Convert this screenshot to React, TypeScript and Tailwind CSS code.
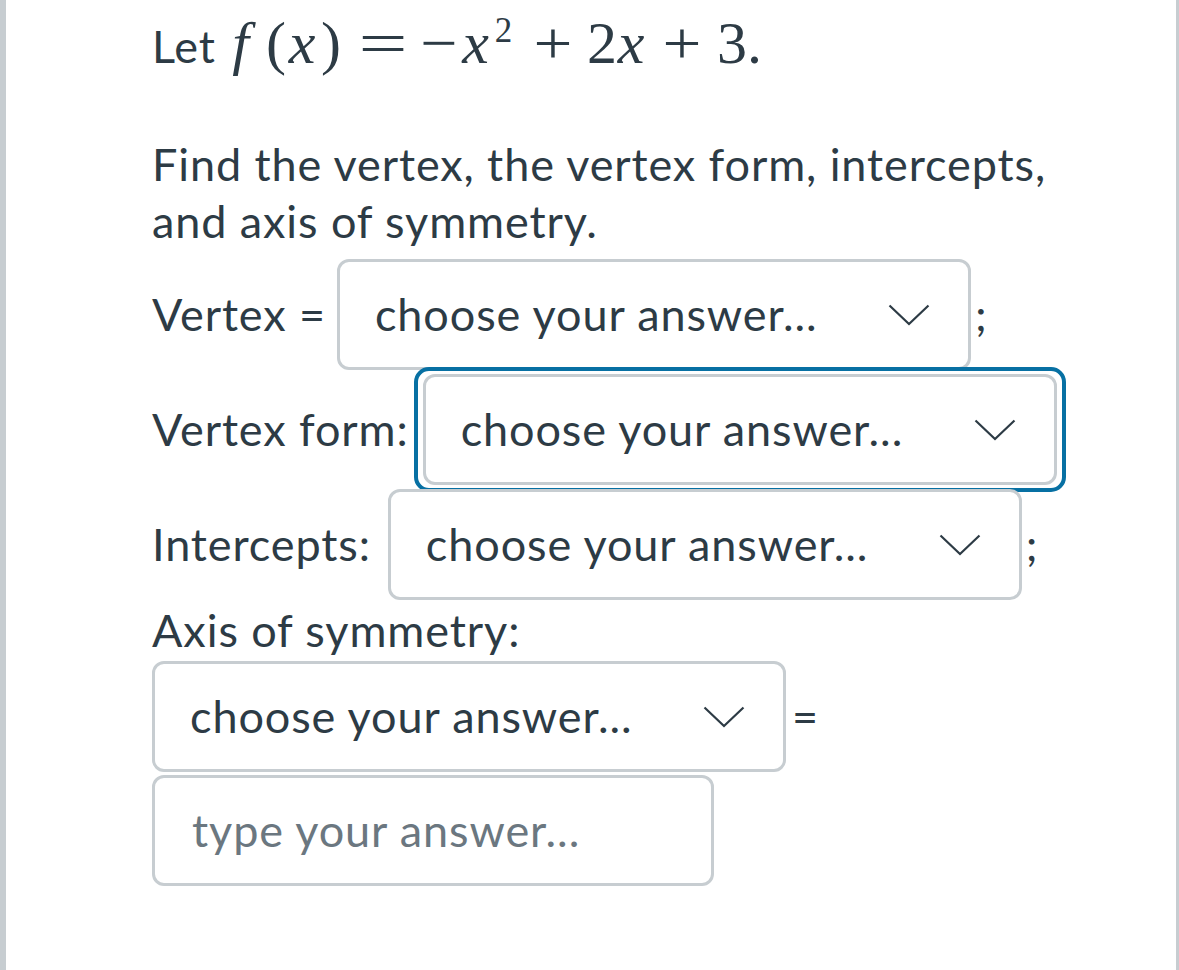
import React from "react";

const ink = "text-[#2d3b45]";
const serif = { fontFamily: "'Liberation Serif', 'DejaVu Serif', serif" };

function Chevron() {
  return (
    <svg width="42" height="22" viewBox="0 0 42 22" fill="none" className="shrink-0">
      <path d="M1.5 1.5 L21 20 L40.5 1.5" stroke="#2d3b45" strokeWidth="2.2" />
    </svg>
  );
}

function Select({ focused = false }: { focused?: boolean }) {
  const box = (
    <div className="flex h-[111px] w-[634px] items-center justify-between rounded-[12px] border-[3px] border-[#c7cdd1] bg-white pl-[35px] pr-[38px]">
      <span className={`text-[45px] leading-none tracking-[0.02em] ${ink}`}>choose your answer...</span>
      <Chevron />
    </div>
  );
  if (!focused) return box;
  return (
    <div className="-mx-[9px] -my-[7px] rounded-[15px] border-[4px] border-[#0770a3] px-[5px] py-[3px]">{box}</div>
  );
}

function MathLine() {
  return (
    <p className="flex h-[58px] items-baseline text-[60px] leading-[58px]" style={serif}>
      <span
        className="w-[73px] text-[45px] tracking-[0.02em]"
        style={{ fontFamily: "Lato, 'Noto Sans', sans-serif" }}
      >
        Let
      </span>
      <span className="w-[31px] text-center italic">f</span>
      <span className="ml-[10px] w-[16px] text-center">(</span>
      <span className="ml-[4px] w-[32px] text-center italic">x</span>
      <span className="ml-[3px] w-[18px] text-center">)</span>
      <span className="ml-[19px] w-[50px] text-center">
        <span className="inline-block scale-x-[1.45]">=</span>
      </span>
      <span className="ml-[12px] w-[37px] text-center">
        <span className="inline-block scale-x-[1.1]">−</span>
      </span>
      <span className="ml-[3px] w-[31px] text-center italic">x</span>
      <span className="ml-[2px] w-[21px] -translate-y-[21px] text-center text-[35px]">2</span>
      <span className="ml-[17px] w-[43px] text-center">
        <span className="inline-block scale-x-[1.15]">+</span>
      </span>
      <span className="ml-[13px] w-[29px] text-center">2</span>
      <span className="w-[30px] text-center italic">x</span>
      <span className="ml-[13px] w-[45px] text-center">
        <span className="inline-block scale-x-[1.15]">+</span>
      </span>
      <span className="ml-[13px] w-[27px] text-center">3</span>
      <span className="ml-[3px] w-[12px] text-center">.</span>
    </p>
  );
}

export default function App() {
  return (
    <div
      className={`flex min-h-[970px] w-[1179px] border-l-[6px] border-r-[3px] border-[#c7cdd1] bg-white ${ink}`}
      style={{ fontFamily: "Lato, 'Noto Sans', sans-serif" }}
    >
      <div className="flex flex-col pl-[146px] pt-[14px]">
        <MathLine />

        <p className="mt-[64px] w-[960px] text-[45px] leading-[57px] tracking-[0.02em]">
          Find the vertex, the vertex form, intercepts, and axis of symmetry.
        </p>

        <div className="mt-[9px] flex flex-col gap-[4px] text-[45px] tracking-[0.02em]">
          <div className="flex items-center">
            <span className="mr-[11px]">Vertex =</span>
            <Select />
            <span className="ml-[4px]">;</span>
          </div>
          <div className="flex items-center">
            <span>Vertex form:</span>
            <div className="ml-[14px]">
              <Select focused />
            </div>
          </div>
          <div className="flex items-center">
            <span className="mr-[17px]">Intercepts:</span>
            <Select />
            <span className="ml-[4px]">;</span>
          </div>
          <div className="leading-[53px]">Axis of symmetry:</div>
          <div className="flex items-center">
            <Select />
            <span className="ml-[6px]">=</span>
          </div>
          <div className="-mt-[1px] flex h-[111px] w-[562px] items-center rounded-[12px] border-[3px] border-[#c7cdd1] pl-[37px]">
            <span className="text-[45px] leading-none text-[#6b7780]">type your answer...</span>
          </div>
        </div>
      </div>
    </div>
  );
}
